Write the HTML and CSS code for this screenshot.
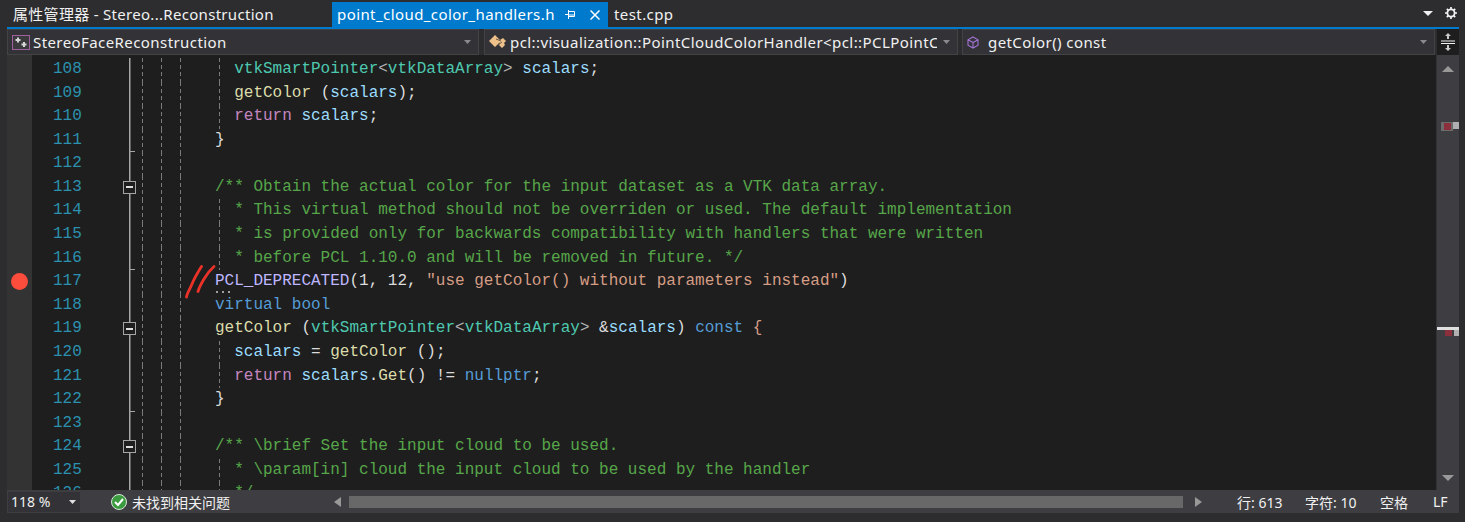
FILE: index.html
```html
<!DOCTYPE html>
<html lang="zh-CN">
<head>
<meta charset="utf-8">
<title>point_cloud_color_handlers.h</title>
<link rel="stylesheet" href="styles.css">
</head>
<body>
<div class="app">
  <header class="tabbar">
    <div class="tool-title">属性管理器 - Stereo...Reconstruction</div>
    <div class="tab active">
      <span class="tab-name">point_cloud_color_handlers.h</span>
      <svg class="pin" width="11" height="9" viewBox="0 0 11 9"><path d="M0 4.500h3M3.500 0v9M3.500 1.500h6v5h-6M3.500 5h6" fill="none" stroke="#fff" stroke-width="1"/></svg>
      <svg class="close" width="10" height="10" viewBox="0 0 10 10"><path d="M.5.5l9 9M9.500.5l-9 9" stroke="#fff" stroke-width="1.500"/></svg>
    </div>
    <div class="tab">test.cpp</div>
    <div class="tab-tools">
      <svg width="10" height="5" viewBox="0 0 10 5"><path d="M0 0h10L5 5z" fill="#f1f1f1"/></svg>
      <svg width="12" height="12" viewBox="0 0 12 12"><circle cx="6" cy="6" r="3.600" fill="none" stroke="#f1f1f1" stroke-width="1.800"/><path d="M6 0v2.500M6 9.500V12M0 6h2.500M9.500 6H12M1.800 1.800l1.800 1.800M8.400 8.400l1.800 1.800M10.200 1.800L8.400 3.600M3.600 8.400l-1.800 1.800" stroke="#f1f1f1" stroke-width="1.700"/></svg>
    </div>
  </header>

  <nav class="navbar">
    <div class="combo c1">
      <svg class="ico" width="18" height="15" viewBox="0 0 18 15"><rect x="0.500" y="0.500" width="17" height="14" fill="#3a3a3d" stroke="#a0609f"/><path d="M6 2.500v5M3.500 5h5M12 7v5M9.500 9.500h5" stroke="#d4d4d4" stroke-width="2"/></svg>
      <span class="combo-text">StereoFaceReconstruction</span>
      <svg class="arrow" width="7" height="4" viewBox="0 0 7 4"><path d="M0 0h7L3.500 4z" fill="#8a8a8d"/></svg>
    </div>
    <div class="combo c2">
      <svg class="ico" width="18" height="16" viewBox="0 0 18 16"><path d="M0 7l6-6 6 6-6 6zM11 6l3-2 3 3-2 2 1 2-3 3-3-3 1-2-1-1z" fill="#eec08a"/><path d="M7 5l5 2M9 11l4-3" stroke="#6b5a45" stroke-width="1"/></svg>
      <span class="combo-text clip">pcl::visualization::PointCloudColorHandler&lt;pcl::PCLPointCloud2&gt;</span>
      <svg class="arrow" width="7" height="4" viewBox="0 0 7 4"><path d="M0 0h7L3.500 4z" fill="#8a8a8d"/></svg>
    </div>
    <div class="combo c3">
      <svg class="ico" width="12" height="13" viewBox="0 0 12 13"><path d="M6 1l5 2.800v5.400L6 12 1 9.200V3.800zM1 3.800l5 2.800 5-2.800M6 6.600V12" fill="none" stroke="#a073d4" stroke-width="1.100"/></svg>
      <span class="combo-text">getColor() const</span>
      <svg class="arrow" width="7" height="4" viewBox="0 0 7 4"><path d="M0 0h7L3.500 4z" fill="#8a8a8d"/></svg>
    </div>
    <div class="split">
      <svg width="14" height="18" viewBox="0 0 14 18"><path d="M0 8h14M0 10.500h14" stroke="#f1f1f1" stroke-width="1.200"/><path d="M7 2v4M7 12v4" stroke="#c8c8c8" stroke-width="2"/><path d="M4 3l3-3 3 3zM4 15l3 3 3-3z" fill="#c8c8c8"/></svg>
    </div>
  </nav>

  <main class="editor">
    <div class="lines">
      <div class="line deep"><span class="glyph"></span><span class="num">108</span><span class="outline"></span><pre class="code">          <i class="ty">vtkSmartPointer</i><i class="op">&lt;</i><i class="ty">vtkDataArray</i><i class="op">&gt;</i> <i class="var">scalars</i><i class="tx">;</i></pre></div>
      <div class="line deep"><span class="glyph"></span><span class="num">109</span><span class="outline"></span><pre class="code">          <i class="fn">getColor</i> <i class="tx">(</i><i class="var">scalars</i><i class="tx">);</i></pre></div>
      <div class="line deep"><span class="glyph"></span><span class="num">110</span><span class="outline"></span><pre class="code">          <i class="ctl">return</i> <i class="var">scalars</i><i class="tx">;</i></pre></div>
      <div class="line"><span class="glyph"></span><span class="num">111</span><span class="outline tick"></span><pre class="code">        <i class="tx">}</i></pre></div>
      <div class="line"><span class="glyph"></span><span class="num">112</span><span class="outline"></span><pre class="code"></pre></div>
      <div class="line"><span class="glyph"></span><span class="num">113</span><span class="outline"><b class="box"></b></span><pre class="code">        <i class="cm">/** Obtain the actual color for the input dataset as a VTK data array.</i></pre></div>
      <div class="line deep"><span class="glyph"></span><span class="num">114</span><span class="outline"></span><pre class="code">          <i class="cm">* This virtual method should not be overriden or used. The default implementation</i></pre></div>
      <div class="line deep"><span class="glyph"></span><span class="num">115</span><span class="outline"></span><pre class="code">          <i class="cm">* is provided only for backwards compatibility with handlers that were written</i></pre></div>
      <div class="line deep"><span class="glyph"></span><span class="num">116</span><span class="outline tick"></span><pre class="code">          <i class="cm">* before PCL 1.10.0 and will be removed in future. */</i></pre></div>
      <div class="line"><span class="glyph"><b class="breakpoint"></b></span><span class="num">117</span><span class="outline"></span><pre class="code">        <i class="mac hint">PCL_DEPRECATED</i><i class="tx">(1, 12, </i><i class="str">"use getColor() without parameters instead"</i><i class="tx">)</i></pre></div>
      <div class="line"><span class="glyph"></span><span class="num">118</span><span class="outline"></span><pre class="code">        <i class="kw">virtual</i> <i class="kw">bool</i></pre></div>
      <div class="line"><span class="glyph"></span><span class="num">119</span><span class="outline"><b class="box"></b></span><pre class="code">        <i class="fn">getColor</i> <i class="tx">(</i><i class="ty">vtkSmartPointer</i><i class="op">&lt;</i><i class="ty">vtkDataArray</i><i class="op">&gt;</i> <i class="tx">&amp;</i><i class="var">scalars</i><i class="tx">)</i> <i class="kw">const</i> <i class="str">{</i></pre></div>
      <div class="line deep"><span class="glyph"></span><span class="num">120</span><span class="outline"></span><pre class="code">          <i class="var">scalars</i> <i class="tx">=</i> <i class="fn">getColor</i> <i class="tx">();</i></pre></div>
      <div class="line deep"><span class="glyph"></span><span class="num">121</span><span class="outline"></span><pre class="code">          <i class="ctl">return</i> <i class="var">scalars</i><i class="tx">.</i><i class="fn">Get</i><i class="tx">() != </i><i class="kw">nullptr</i><i class="tx">;</i></pre></div>
      <div class="line"><span class="glyph"></span><span class="num">122</span><span class="outline tick"></span><pre class="code">        <i class="tx">}</i></pre></div>
      <div class="line"><span class="glyph"></span><span class="num">123</span><span class="outline"></span><pre class="code"></pre></div>
      <div class="line"><span class="glyph"></span><span class="num">124</span><span class="outline"><b class="box"></b></span><pre class="code">        <i class="cm">/** \brief Set the input cloud to be used.</i></pre></div>
      <div class="line deep"><span class="glyph"></span><span class="num">125</span><span class="outline"></span><pre class="code">          <i class="cm">* \param[in] cloud the input cloud to be used by the handler</i></pre></div>
      <div class="line deep"><span class="glyph"></span><span class="num">126</span><span class="outline"></span><pre class="code">          <i class="cm">*/</i></pre></div>
    </div>
    <svg class="scribble" width="36" height="38" viewBox="0 0 36 38"><path d="M2.500 32C3 28 6 24 8 19 10 14 14 7 17.500 1.500M14 26.500C15 23 17 19 20 14 23 9 26 5 30 1.500" fill="none" stroke="#ea3229" stroke-width="2.800" stroke-linecap="round"/></svg>
    <aside class="vscroll">
      <svg width="12" height="6" viewBox="0 0 12 6"><path d="M0 6h12L6 0z" fill="#999"/></svg>
      <div class="track">
        <div class="mark m1"><s class="mk-bg"><s class="mk-red"></s></s><s class="mk-grey"></s></div>
        <div class="caret"></div>
        <div class="mark m2"><s class="mk-red"></s><s class="mk-grey"></s></div>
      </div>
      <svg width="12" height="6" viewBox="0 0 12 6"><path d="M0 0h12L6 6z" fill="#999"/></svg>
    </aside>
  </main>

  <footer class="status">
    <div class="zoom"><span>118 %</span><svg width="7" height="4" viewBox="0 0 7 4"><path d="M0 0h7L3.500 4z" fill="#e0e0e0"/></svg></div>
    <div class="health">
      <svg width="16" height="16" viewBox="0 0 16 16"><circle cx="8" cy="8" r="7.500" fill="#3a9b3f" stroke="#d8e8d8" stroke-width="1"/><path d="M4 8l3 3 5-6" fill="none" stroke="#fff" stroke-width="2"/></svg>
      <span>未找到相关问题</span>
    </div>
    <div class="hscroll">
      <svg width="7" height="10" viewBox="0 0 7 10"><path d="M7 0v10L0 5z" fill="#999"/></svg>
      <div class="thumb"></div>
      <svg width="7" height="10" viewBox="0 0 7 10"><path d="M0 0v10l7-5z" fill="#999"/></svg>
    </div>
    <div class="info i1">行: 613</div>
    <div class="info i2">字符: 10</div>
    <div class="info i3">空格</div>
    <div class="info i4">LF</div>
  </footer>
</div>
</body>
</html>
```
FILE: styles.css
```css
* { box-sizing: border-box; }
html, body { margin: 0; padding: 0; }
body {
  width: 1465px; height: 522px; overflow: hidden;
  background: #2d2d30; color: #f1f1f1;
  font-family: "Noto Sans", "Noto Sans CJK SC", sans-serif;
}
.app { display: flex; flex-direction: column; height: 522px; padding: 0 6px 9px 7px; }

/* tabs */
.tabbar {
  display: flex; align-items: flex-end; height: 29px; flex: none;
  border-bottom: 2px solid #007acc; font-size: 15px; letter-spacing: .42px;
}
.tool-title { width: 325px; height: 27px; padding: 4px 0 0 6px; line-height: 20px; white-space: nowrap; letter-spacing: .3px; }
.tab { height: 25px; padding: 0 6px; line-height: 25px; white-space: nowrap; color: #f1f1f1; }
.tab.active { width: 276px; background: #007acc; color: #fff; display: flex; align-items: center; padding-left: 5px; }
.tab-name { width: 228px; flex: none; }
.pin { margin-right: 14px; flex: none; }
.tab-tools { margin-left: auto; height: 27px; width: 34px; margin-right: 2px; display: flex; align-items: center; justify-content: space-between; padding-bottom: 1px; }

/* navigation */
.navbar { display: flex; height: 26px; flex: none; font-size: 15px; letter-spacing: .42px; }
.combo {
  display: flex; align-items: center; height: 26px;
  background: #333337; border: 1px solid #434346; padding: 0 7px 0 4px; min-width: 0;
}
.c1 { width: 472px; margin-right: 5px; }
.c2 { width: 474px; margin-right: 4px; }
.c3 { width: 473px; margin-right: 2px; }
.combo-text { flex: 1; min-width: 0; padding-left: 3px; white-space: nowrap; overflow: hidden; color: #f1f1f1; }
.c1 .ico { margin-left: 0; }
.c1 .combo-text { padding-left: 3px; }
.c2 .combo-text { padding-left: 3px; margin-right: 2px; }
.c3 .combo-text { padding-left: 9px; }
.arrow { flex: none; margin-left: 4px; }
.split { flex: 1; background: #1e1e1e; display: flex; align-items: center; justify-content: center; }

/* editor */
.editor { flex: 1; min-height: 0; display: flex; position: relative; background: #1e1e1e; overflow: hidden; }
.lines { flex: 1; padding-top: 3px; overflow: hidden; background: linear-gradient(#333333, #333333) 0 0 / 25px 100% no-repeat, #1e1e1e; }
.line { display: flex; height: 23.59px; }
.glyph { width: 25px; flex: none; background: #333333; display: flex; align-items: center; justify-content: center; }
.breakpoint { width: 17px; height: 17px; border-radius: 50%; background: #fb4c3c; }
.num {
  width: 74px; flex: none; padding-left: 21px;
  font: 16px/23.59px "Liberation Mono", monospace; color: #2b91af;
}
.outline {
  width: 32.200px; flex: none; position: relative;
  background: linear-gradient(#a5a5a5, #a5a5a5) 23px 0 / 1.500px 100% no-repeat;
}
.tick::after { content: ""; position: absolute; left: 24px; bottom: 0; width: 5px; height: 1px; background: #a5a5a5; }
.box {
  position: absolute; left: 16.500px; top: 5px; width: 13px; height: 13px;
  background: #1e1e1e; border: 1px solid #a5a5a5;
}
.box::after { content: ""; position: absolute; left: 2px; top: 4.500px; width: 7px; height: 2px; background: #dcdcdc; }
.code {
  margin: 0; flex: 1; height: 100%;
  font: 16px/23.59px "Liberation Mono", monospace; white-space: pre;
  background-image:
    repeating-linear-gradient(#7a7a7a 0 4px, transparent 4px 7px),
    repeating-linear-gradient(#7a7a7a 0 4px, transparent 4px 7px),
    repeating-linear-gradient(#7a7a7a 0 4px, transparent 4px 7px);
  background-size: 1px 100%;
  background-position: 4px 0, 23px 0, 42px 0;
  background-repeat: no-repeat;
}
.deep .code {
  background-image:
    repeating-linear-gradient(#7a7a7a 0 4px, transparent 4px 7px),
    repeating-linear-gradient(#7a7a7a 0 4px, transparent 4px 7px),
    repeating-linear-gradient(#7a7a7a 0 4px, transparent 4px 7px),
    repeating-linear-gradient(#7a7a7a 0 4px, transparent 4px 7px);
  background-position: 4px 0, 23px 0, 42px 0, 81px 0;
}
.code i { font-style: normal; }
.tx { color: #dcdcdc; }
.op { color: #b4b4b4; }
.ty { color: #4ec9b0; }
.var { color: #9cdcfe; }
.fn { color: #dcdcaa; }
.ctl { color: #c586c0; }
.kw { color: #569cd6; }
.cm { color: #57a64a; }
.mac { color: #beb7ff; }
.str { color: #d69d85; }
.hint { position: relative; }
.hint::after { content: ""; position: absolute; left: 1px; top: 19px; width: 17px; height: 2px;
  background: repeating-linear-gradient(90deg, #a0a0a0 0 2px, transparent 2px 6px); }
.scribble { position: absolute; left: 177px; top: 210px; pointer-events: none; }

/* overview scrollbar */
.vscroll { width: 23px; flex: none; background: #3e3e42; display: flex; flex-direction: column; align-items: center; padding: 11px 0 9px; border-left: 1px solid #333337; }
.track { flex: 1; width: 100%; position: relative; }
.mark { position: absolute; display: flex; }
.m1 { top: 50px; left: 4px; height: 9px; }
.m2 { top: 258px; left: 8px; height: 6px; gap: 2px; }
.mk-bg { width: 12px; background: #6c6c6c; padding: 1px 4px 1px 3px; display: block; }
.mk-red { display: block; width: 7px; height: 100%; background: #8b2f3c; }
.mk-grey { display: block; width: 6px; height: 100%; background: #b0b0b0; }
.m1 .mk-grey { height: 7px; }
.caret { position: absolute; top: 255px; left: 0; right: 0; height: 3px; background: #e0e0e0; }

/* status */
.status { height: 23px; flex: none; background: #3e3e42; display: flex; align-items: center; font-size: 14px; }
.zoom { width: 74px; height: 22px; background: #333337; border: 1px solid #3e3e42; display: flex; align-items: center; justify-content: space-between; padding: 0 2px 0 3px; }
.zoom svg { margin-right: 2px; }
.health { margin-left: 30px; display: flex; align-items: center; gap: 5px; font-size: 14px; width: 223px; }
.hscroll { width: 868px; display: flex; align-items: center; }
.thumb { width: 836px; height: 12px; background: #686868; margin: 0 12px 0 8px; }
.info { white-space: nowrap; }
.i1 { margin-left: 35px; width: 68px; }
.i2 { width: 75px; }
.i3 { width: 53px; }
```
